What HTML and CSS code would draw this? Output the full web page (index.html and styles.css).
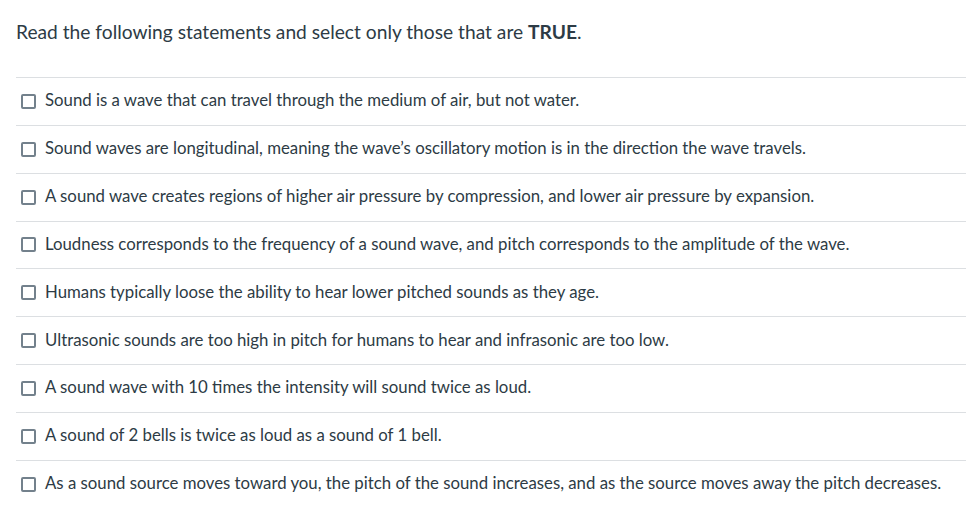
FILE: index.html
```html
<!DOCTYPE html>
<html>
<head>
<meta charset="utf-8">
<link rel="stylesheet" href="styles.css">
</head>
<body>
<div class="question">
  <p class="prompt">Read the following statements and select only those that are <strong>TRUE</strong>.</p>
  <ul class="answers">
    <li class="answer"><span class="box"></span><span>Sound is a wave that can travel through the medium of air, but not water.</span></li>
    <li class="answer"><span class="box"></span><span>Sound waves are longitudinal, meaning the wave’s oscillatory motion is in the direction the wave travels.</span></li>
    <li class="answer"><span class="box"></span><span>A sound wave creates regions of higher air pressure by compression, and lower air pressure by expansion.</span></li>
    <li class="answer"><span class="box"></span><span>Loudness corresponds to the frequency of a sound wave, and pitch corresponds to the amplitude of the wave.</span></li>
    <li class="answer"><span class="box"></span><span>Humans typically loose the ability to hear lower pitched sounds as they age.</span></li>
    <li class="answer"><span class="box"></span><span>Ultrasonic sounds are too high in pitch for humans to hear and infrasonic are too low.</span></li>
    <li class="answer"><span class="box"></span><span>A sound wave with 10 times the intensity will sound twice as loud.</span></li>
    <li class="answer"><span class="box"></span><span>A sound of 2 bells is twice as loud as a sound of 1 bell.</span></li>
    <li class="answer"><span class="box"></span><span>As a sound source moves toward you, the pitch of the sound increases, and as the source moves away the pitch decreases.</span></li>
  </ul>
</div>
</body>
</html>
```
FILE: styles.css
```css
html, body {
  margin: 0;
  padding: 0;
  background: #ffffff;
}
body {
  font-family: Lato, "Liberation Sans", sans-serif;
  color: #2d3b45;
}
.question {
  padding: 18px 4px 0 16px;
}
.prompt {
  margin: 0;
  font-size: 19.2px;
  line-height: 28px;
  height: 59px;
}
.prompt strong {
  font-weight: 700;
}
.answers {
  list-style: none;
  margin: 0;
  padding: 0;
}
.answer {
  display: flex;
  align-items: center;
  gap: 9px;
  border-top: 1px solid #dcdfe2;
  padding-left: 5px;
  padding-bottom: 3px;
  box-sizing: border-box;
  height: 47.85px;
  font-size: 16.8px;
}
.box {
  flex: none;
  width: 11px;
  height: 11px;
  border: 2px solid #73818c;
  border-radius: 2px;
  margin-top: 3px;
}
```
